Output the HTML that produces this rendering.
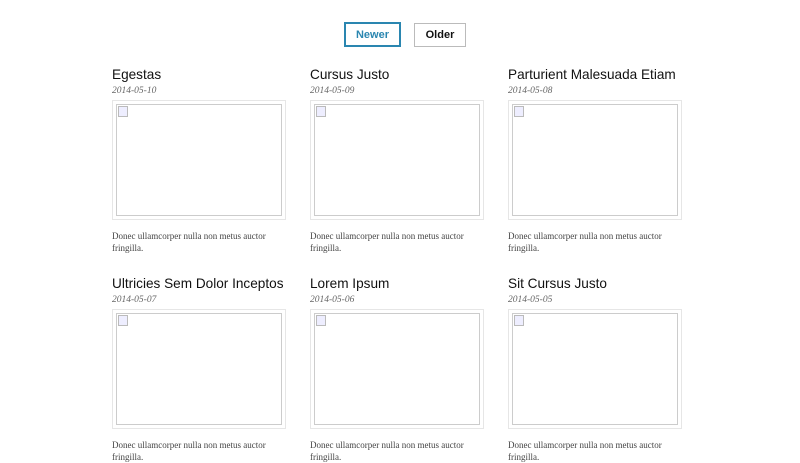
<!DOCTYPE html>
<html><head><style>
body{margin:0;background:#fff;width:800px;height:450px;overflow:hidden;position:relative;font-family:"Liberation Sans",sans-serif}
.btn{position:absolute;top:23px;height:22px;border:1px solid #bbb;font:bold 11px "Liberation Sans",sans-serif;text-align:center;line-height:23px;color:#111;box-sizing:content-box}
.card{position:absolute;width:176px}
.t{position:absolute;top:0;left:0;font-size:13.6px;color:#111;white-space:nowrap;line-height:18px}
.d{position:absolute;top:20px;left:0;font:italic 9.5px "Liberation Serif",serif;color:#666}
.f{position:absolute;top:34px;left:0;width:172px;height:118px;border:1px solid #e6e6e6}
.i{position:absolute;left:3px;top:3px;width:164px;height:110px;border:1px solid #ccc}
.i:before{content:"";position:absolute;left:1px;top:1px;width:8px;height:9px;border:1px solid #bbb;background:#eef}
.p{position:absolute;top:164px;left:0;width:176px;font:9px/12px "Liberation Serif",serif;color:#444}
</style></head><body>
<div class="btn" style="left:344px;width:53px;border:2px solid #2a86b0;top:22px;height:21px;color:#2a86b0">Newer</div>
<div class="btn" style="left:414px;width:50px">Older</div>

<div class="card" style="left:112px;top:66px"><div class="t">Egestas</div><div class="d">2014-05-10</div><div class="f"><div class="i"></div></div><div class="p">Donec ullamcorper nulla non metus auctor fringilla.</div></div>
<div class="card" style="left:310px;top:66px"><div class="t">Cursus Justo</div><div class="d">2014-05-09</div><div class="f"><div class="i"></div></div><div class="p">Donec ullamcorper nulla non metus auctor fringilla.</div></div>
<div class="card" style="left:508px;top:66px"><div class="t">Parturient Malesuada Etiam</div><div class="d">2014-05-08</div><div class="f"><div class="i"></div></div><div class="p">Donec ullamcorper nulla non metus auctor fringilla.</div></div>

<div class="card" style="left:112px;top:275px"><div class="t">Ultricies Sem Dolor Inceptos</div><div class="d">2014-05-07</div><div class="f"><div class="i"></div></div><div class="p">Donec ullamcorper nulla non metus auctor fringilla.</div></div>
<div class="card" style="left:310px;top:275px"><div class="t">Lorem Ipsum</div><div class="d">2014-05-06</div><div class="f"><div class="i"></div></div><div class="p">Donec ullamcorper nulla non metus auctor fringilla.</div></div>
<div class="card" style="left:508px;top:275px"><div class="t">Sit Cursus Justo</div><div class="d">2014-05-05</div><div class="f"><div class="i"></div></div><div class="p">Donec ullamcorper nulla non metus auctor fringilla.</div></div>
</body></html>
